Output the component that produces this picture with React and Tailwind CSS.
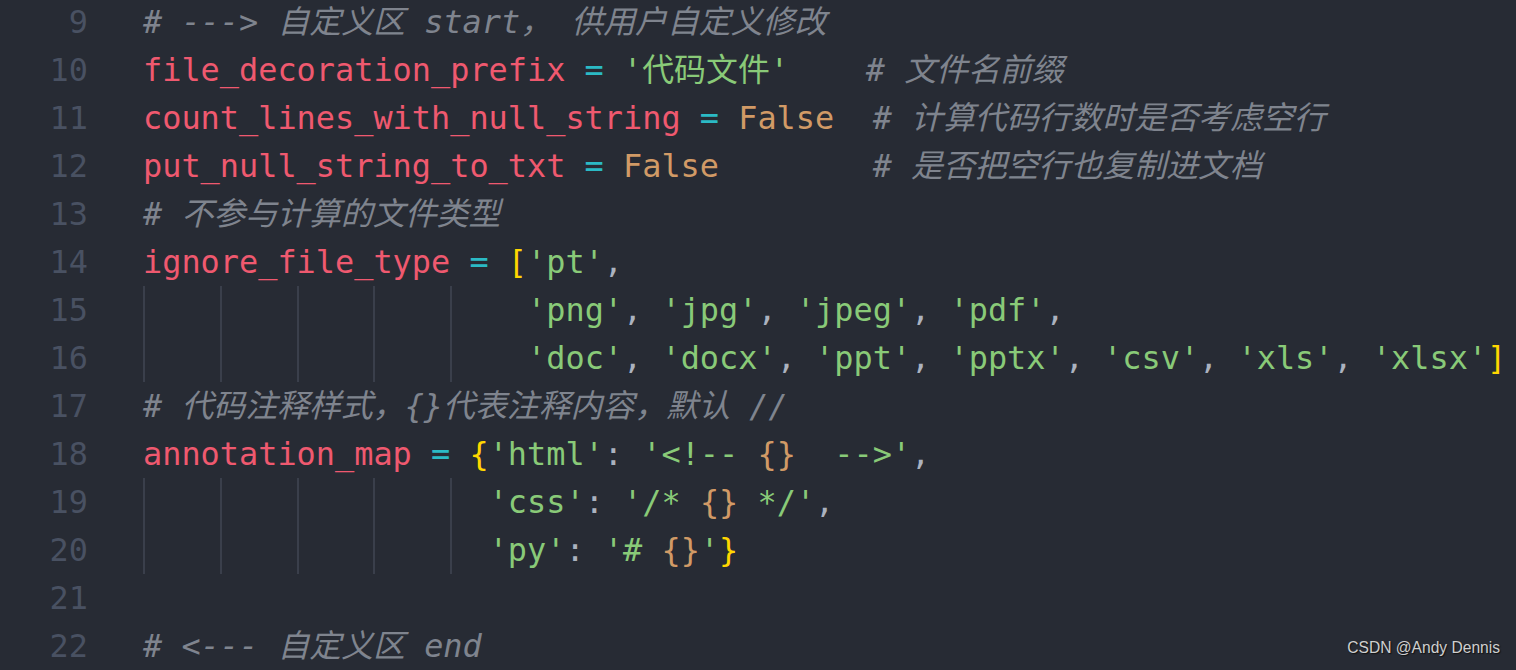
const C = {
    v: "text-[#ef596f]",
    op: "text-[#2bbac5]",
    s: "text-[#89ca78]",
    n: "text-[#d19a66]",
    b: "text-[#ffd700]",
    p: "text-[#abb2bf]",
    c: "text-[#7f848e] italic",
};

// each line: [number, indentGuides, tokens]
const lines = [
    [9, null, [["# ---> 自定义区 start， 供用户自定义修改", "c"]]],
    [
        10,
        null,
        [
            ["file_decoration_prefix", "v"],
            [" "],
            ["=", "op"],
            [" "],
            ["'代码文件'", "s"],
            ["    "],
            ["# 文件名前缀", "c"],
        ],
    ],
    [
        11,
        null,
        [
            ["count_lines_with_null_string", "v"],
            [" "],
            ["=", "op"],
            [" "],
            ["False", "n"],
            ["  "],
            ["# 计算代码行数时是否考虑空行", "c"],
        ],
    ],
    [
        12,
        null,
        [
            ["put_null_string_to_txt", "v"],
            [" "],
            ["=", "op"],
            [" "],
            ["False", "n"],
            ["        "],
            ["# 是否把空行也复制进文档", "c"],
        ],
    ],
    [13, null, [["# 不参与计算的文件类型", "c"]]],
    [
        14,
        null,
        [
            ["ignore_file_type", "v"],
            [" "],
            ["=", "op"],
            [" "],
            ["[", "b"],
            ["'pt'", "s"],
            [",", "p"],
        ],
    ],
    [
        15,
        [4, 4, 4, 4, 4],
        [
            ["'png'", "s"],
            [", ", "p"],
            ["'jpg'", "s"],
            [", ", "p"],
            ["'jpeg'", "s"],
            [", ", "p"],
            ["'pdf'", "s"],
            [",", "p"],
        ],
    ],
    [
        16,
        [4, 4, 4, 4, 4],
        [
            ["'doc'", "s"],
            [", ", "p"],
            ["'docx'", "s"],
            [", ", "p"],
            ["'ppt'", "s"],
            [", ", "p"],
            ["'pptx'", "s"],
            [", ", "p"],
            ["'csv'", "s"],
            [", ", "p"],
            ["'xls'", "s"],
            [", ", "p"],
            ["'xlsx'", "s"],
            ["]", "b"],
        ],
    ],
    [17, null, [["# 代码注释样式，{}代表注释内容，默认 //", "c"]]],
    [
        18,
        null,
        [
            ["annotation_map", "v"],
            [" "],
            ["=", "op"],
            [" "],
            ["{", "b"],
            ["'html'", "s"],
            [": ", "p"],
            ["'<!-- ", "s"],
            ["{}", "n"],
            ["  -->'", "s"],
            [",", "p"],
        ],
    ],
    [
        19,
        [4, 4, 4, 4, 2],
        [
            ["'css'", "s"],
            [": ", "p"],
            ["'/* ", "s"],
            ["{}", "n"],
            [" */'", "s"],
            [",", "p"],
        ],
    ],
    [
        20,
        [4, 4, 4, 4, 2],
        [
            ["'py'", "s"],
            [": ", "p"],
            ["'# ", "s"],
            ["{}", "n"],
            ["'", "s"],
            ["}", "b"],
        ],
    ],
    [21, null, []],
    [22, null, [["# <--- 自定义区 end", "c"]]],
];

function CodeLine({ num, guides, tokens }) {
    return (
        <div className="flex h-[48px] leading-[48px]">
            <div className="w-[88px] shrink-0 text-right text-[#495162]">
                {num}
            </div>
            <div className="ml-[55px] whitespace-pre">
                {guides &&
                    guides.map((w, i) => (
                        <span
                            key={i}
                            className="inline-block h-[48px] align-top shadow-[inset_2px_0_0_#3a3f4b]"
                        >
                            {" ".repeat(w)}
                        </span>
                    ))}
                {tokens.map(([text, kind], i) => (
                    <span key={i} className={kind ? C[kind] : ""}>
                        {text}
                    </span>
                ))}
            </div>
        </div>
    );
}

export default function App() {
    return (
        <div className="relative h-[670px] w-[1516px] overflow-hidden bg-[#272b34]">
            <div className="mt-[-2px] font-['DejaVu_Sans_Mono','Noto_Sans_CJK_SC',monospace] text-[31.9px] text-[#abb2bf]">
                {lines.map(([num, guides, tokens]) => (
                    <CodeLine
                        key={num}
                        num={num}
                        guides={guides}
                        tokens={tokens}
                    />
                ))}
            </div>

            {/* watermark */}
            <div className="absolute bottom-[11px] right-[16px] font-['Liberation_Sans',Arial,sans-serif] text-[15.6px] text-[#cfcfcf] [text-shadow:1px_1px_1px_#111]">
                CSDN @Andy Dennis
            </div>
        </div>
    );
}
